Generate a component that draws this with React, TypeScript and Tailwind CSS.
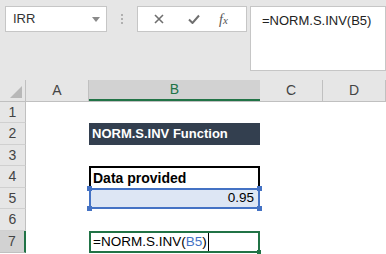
import React from 'react'

const rows = [1, 2, 3, 4, 5, 6, 7]
const heights: Record<number, string> = {
  1: 'h-[21px]',
  2: 'h-[22px]',
  3: 'h-[21px]',
  4: 'h-[22px]',
  5: 'h-[21px]',
  6: 'h-[22px]',
  7: 'h-[22px]',
}

function CellB({ row }: { row: number }) {
  if (row === 2)
    return (
      <div className="w-[171px] h-full bg-[#333f4f] flex items-center pl-[3px] text-white font-bold text-[13px]">
        NORM.S.INV Function
      </div>
    )
  if (row === 4)
    return (
      <div className="w-[171px] h-full border-t-2 border-x-2 border-black flex items-center pl-[2px] text-black font-bold text-[14px]">
        Data provided
      </div>
    )
  if (row === 5)
    return (
      <div className="relative w-[171px] h-full bg-[#dde6f4] border-2 border-[#4472c4] flex items-center justify-end pr-[4px] text-[13.5px] text-black">
        0.95
        <span className="absolute -left-[4px] -top-[4px] w-[5px] h-[5px] bg-[#4472c4]" />
        <span className="absolute -right-[4px] -top-[4px] w-[5px] h-[5px] bg-[#4472c4]" />
        <span className="absolute -left-[4px] -bottom-[4px] w-[5px] h-[5px] bg-[#4472c4]" />
        <span className="absolute -right-[4px] -bottom-[4px] w-[5px] h-[5px] bg-[#4472c4]" />
      </div>
    )
  if (row === 7)
    return (
      <div className="relative w-[171px] h-full border-2 border-[#217346] flex items-stretch pl-[2px] text-[13.5px] text-black">
        <span className="flex items-center">
          =NORM.S.INV(<span className="text-[#4472c4]">B5</span>)
        </span>
        <span className="w-[1.5px] bg-black ml-[1px]" />
        <span className="absolute -right-[3px] -bottom-[3px] w-[4px] h-[4px] bg-[#217346]" />
      </div>
    )
  return <div className="w-[171px] h-full" />
}

export default function App() {
  return (
    <div
      className="w-[386px] h-[254px] overflow-hidden bg-white"
      style={{ fontFamily: '"Liberation Sans", Arial, sans-serif' }}
    >
      {/* formula bar */}
      <div className="h-[80px] bg-[#e6e6e6] flex items-start pt-[6px] pl-[5px]">
        <div className="w-[102px] h-[26px] bg-white border border-[#c6c6c6] flex items-center justify-between pl-[7px] pr-[6px] text-[13px] text-[#333]">
          IRR
          <svg width="8" height="5" viewBox="0 0 8 5">
            <path d="M0 0h8L4 5z" fill="#8a8a8a" />
          </svg>
        </div>
        <div className="w-[30px] h-[26px] flex flex-col items-center justify-center gap-[2px]">
          <span className="w-[2px] h-[2px] bg-[#b0b0b0]" />
          <span className="w-[2px] h-[2px] bg-[#b0b0b0]" />
          <span className="w-[2px] h-[2px] bg-[#b0b0b0]" />
        </div>
        <div className="w-[110px] h-[26px] bg-white border border-[#c6c6c6] flex items-center">
          <svg className="ml-[16px]" width="10" height="10" viewBox="0 0 10 10">
            <path d="M1 1l8 8M9 1l-8 8" stroke="#6f6f6f" strokeWidth="1.6" />
          </svg>
          <svg className="ml-[24px]" width="12" height="10" viewBox="0 0 12 10">
            <path d="M1 5.5l3.5 3.5L11 1.5" stroke="#6f6f6f" strokeWidth="2" fill="none" />
          </svg>
          <span
            className="ml-[19px] text-[14px] italic text-[#555]"
            style={{ fontFamily: '"Liberation Serif", serif' }}
          >
            f<span className="text-[11px]">x</span>
          </span>
        </div>
        <div className="ml-[3px] flex-1 h-[65px] bg-white border border-[#c6c6c6] pl-[11px] pt-[4px] text-[13px] text-[#222]">
          =NORM.S.INV(B5)
        </div>
      </div>

      {/* column headers */}
      <div className="h-[22px] flex bg-[#e6e6e6] border-b border-[#c0c0c0] text-[14px] text-[#444]">
        <div className="w-[26px] h-full border-r border-[#c0c0c0] flex items-end justify-end pr-[3px] pb-[3px]">
          <svg width="12" height="12" viewBox="0 0 12 12">
            <path d="M12 0V12H0z" fill="#b8b8b8" />
          </svg>
        </div>
        <div className="w-[63px] h-full border-r border-[#c0c0c0] flex items-center justify-center">A</div>
        <div className="w-[171px] h-full bg-[#d2d2d2] border-b-2 border-[#217346] flex items-center justify-center text-[#217346]">
          B
        </div>
        <div className="w-[63px] h-full border-r border-[#c0c0c0] flex items-center justify-center">C</div>
        <div className="w-[63px] h-full border-r border-[#c0c0c0] flex items-center justify-center">D</div>
      </div>

      {/* rows */}
      {rows.map((r) => (
        <div key={r} className={`flex ${heights[r]}`}>
          <div
            className={
              r === 7
                ? 'w-[26px] h-full bg-[#d2d2d2] border-r-2 border-[#217346] border-b border-b-[#c0c0c0] flex items-center justify-center text-[14px] text-[#444]'
                : 'w-[26px] h-full bg-[#e6e6e6] border-r border-[#c0c0c0] border-b border-b-[#d0d0d0] flex items-center justify-center text-[14px] text-[#444]'
            }
          >
            {r}
          </div>
          <div className="w-[63px] h-full" />
          <CellB row={r} />
          <div className="w-[63px] h-full" />
          <div className="flex-1 h-full" />
        </div>
      ))}
    </div>
  )
}
